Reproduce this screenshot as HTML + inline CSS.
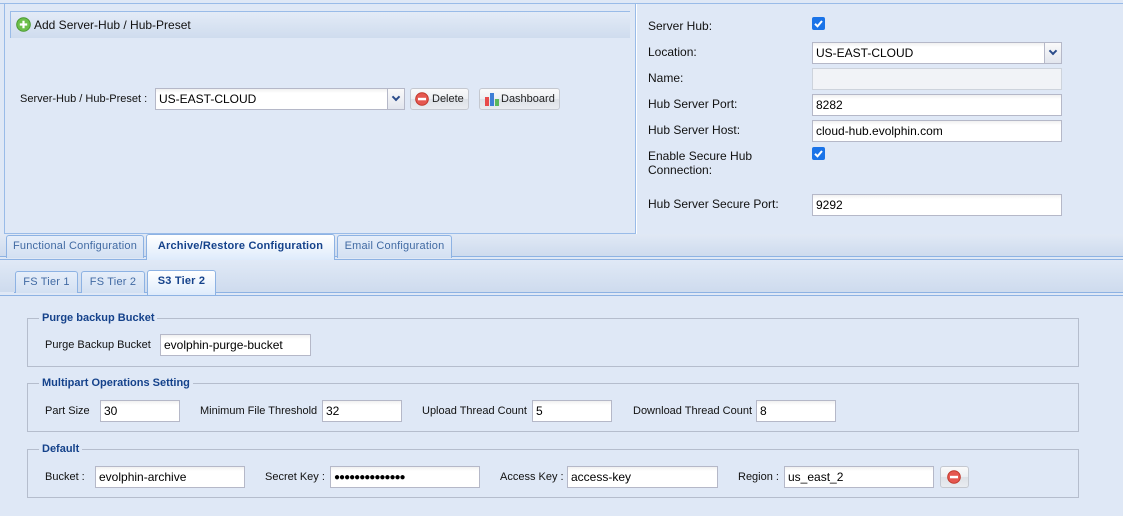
<!DOCTYPE html>
<html><head><meta charset="utf-8"><style>
*{box-sizing:border-box;margin:0;padding:0}
body{width:1123px;height:516px;background:#dfe8f6;font-family:"Liberation Sans",Arial,sans-serif;font-size:12px;color:#000;position:relative;overflow:hidden}
.a{position:absolute}
.lbl{position:absolute;font-size:12px;color:#111;white-space:nowrap}
.inp{position:absolute;height:22px;background:#fff;border:1px solid #b5b8c8;font-size:12px;line-height:21px;padding-left:3px;white-space:nowrap;background-image:linear-gradient(#f0f0f0,#fff 4px)}
.chk{position:absolute;width:13px;height:13px;background:#1a73e8;border-radius:2px}
.trig{position:absolute;right:0;top:0;width:17px;height:20px;background:linear-gradient(#fafafa,#e2e6ee);border-left:1px solid #b5b8c8}
.trig:after{content:"";position:absolute;left:5px;top:5px;width:4px;height:4px;border-right:2px solid #2b4c8a;border-bottom:2px solid #2b4c8a;transform:rotate(45deg)}
.btn{position:absolute;height:22px;border:1px solid #c4c8d0;border-radius:3px;background:linear-gradient(#fafafa 0%,#eceff3 50%,#dde1e7 51%,#e9ecf0 100%);font-size:11px;line-height:20px;color:#222}
.tab{position:absolute;height:23px;border:1px solid #8db2e3;border-bottom:none;border-radius:3px 3px 0 0;background:linear-gradient(#e6eefa,#d3e0f2);font-family:"Liberation Sans",Arial,sans-serif;font-size:11px;color:#416aa3;text-align:center;line-height:21px;white-space:nowrap;letter-spacing:0.2px}
.tab.on{background:linear-gradient(#fff,#deebfb);color:#15428b;font-weight:bold;height:24px}
.fs{position:absolute;border:1px solid #b5bdcd;left:27px;width:1052px;height:49px}
.lg{position:absolute;top:-7px;left:11px;background:#dfe8f6;padding:0 3px;font-size:11px;font-weight:bold;color:#15428b}
.fl{font-size:11px}
</style></head><body>
<div class="a" style="left:0;top:3px;width:1123px;height:1px;background:#99bbe8"></div>
<div class="a" style="left:4px;top:4px;width:632px;height:230px;border:1px solid #99bbe8;border-top:none;background:#dfe8f6"></div>
<div class="a" style="left:636px;top:4px;width:1px;height:230px;background:#fff"></div>
<div class="a" style="left:10px;top:11px;width:620px;height:27px;border:1px solid #99bbe8;border-right:none;border-bottom:none;background:linear-gradient(#e3ebf7,#cfdcee)"></div>
<svg class="a" style="left:16px;top:17px" width="15" height="15" viewBox="0 0 15 15"><circle cx="7.5" cy="7.5" r="6.8" fill="#6cbf4a" stroke="#4a9a32"/><path d="M7.5 3.8v7.4M3.8 7.5h7.4" stroke="#fff" stroke-width="2.2"/></svg>
<div class="lbl" style="left:34px;top:18px">Add Server-Hub / Hub-Preset</div>
<div class="lbl" style="left:20px;top:93px;font-size:11px">Server-Hub / Hub-Preset :</div>
<div class="inp" style="left:155px;top:88px;width:250px">US-EAST-CLOUD<div class="trig"></div></div>
<div class="btn" style="left:410px;top:88px;width:59px"><svg class="a" style="left:4px;top:3px" width="14" height="14"><circle cx="7" cy="7" r="6.3" fill="#e5574f" stroke="#c0392b"/><rect x="3" y="5.8" width="8" height="2.5" fill="#fff"/></svg><span class="a" style="left:21px;top:0">Delete</span></div>
<div class="btn" style="left:479px;top:88px;width:81px"><svg class="a" style="left:4px;top:3px" width="16" height="15"><rect x="1" y="5" width="4" height="9" fill="#e84a4a"/><rect x="6" y="1" width="4" height="13" fill="#3f7fd6"/><rect x="11" y="7" width="4" height="7" fill="#5cb85c"/></svg><span class="a" style="left:21px;top:0">Dashboard</span></div>
<div class="lbl" style="left:648px;top:19px">Server Hub:</div>
<div class="chk" style="left:812px;top:17px"><svg width="13" height="13"><path d="M3 6.8l2.5 2.5L10 4" stroke="#fff" stroke-width="2" fill="none"/></svg></div>
<div class="lbl" style="left:648px;top:45px">Location:</div>
<div class="inp" style="left:812px;top:42px;width:250px">US-EAST-CLOUD<div class="trig"></div></div>
<div class="lbl" style="left:648px;top:71px">Name:</div>
<div class="inp" style="left:812px;top:68px;width:250px;background:#f1f3f7;border-color:#cdd3dc"></div>
<div class="lbl" style="left:648px;top:97px">Hub Server Port:</div>
<div class="inp" style="left:812px;top:94px;width:250px">8282</div>
<div class="lbl" style="left:648px;top:123px">Hub Server Host:</div>
<div class="inp" style="left:812px;top:120px;width:250px">cloud-hub.evolphin.com</div>
<div class="lbl" style="left:648px;top:149px;line-height:14px">Enable Secure Hub<br>Connection:</div>
<div class="chk" style="left:812px;top:147px"><svg width="13" height="13"><path d="M3 6.8l2.5 2.5L10 4" stroke="#fff" stroke-width="2" fill="none"/></svg></div>
<div class="lbl" style="left:648px;top:197px">Hub Server Secure Port:</div>
<div class="inp" style="left:812px;top:194px;width:250px">9292</div>
<div class="a" style="left:0;top:234px;width:1123px;height:22px;background:linear-gradient(#e1e9f5,#cedbee)"></div>
<div class="a" style="left:0;top:256px;width:1123px;height:1px;background:#8db2e3"></div>
<div class="a" style="left:0;top:259px;width:1123px;height:1px;background:#8db2e3"></div>
<div class="tab" style="left:6px;top:235px;width:138px">Functional Configuration</div>
<div class="tab on" style="left:146px;top:234px;width:189px;height:26px;line-height:23px">Archive/Restore Configuration</div>
<div class="tab" style="left:337px;top:235px;width:115px">Email Configuration</div>
<div class="a" style="left:0;top:260px;width:1123px;height:32px;background:linear-gradient(#e0e9f6,#cedbee)"></div>
<div class="a" style="left:14px;top:292px;width:1109px;height:1px;background:#8db2e3"></div>
<div class="a" style="left:0;top:295px;width:1123px;height:1px;background:#8db2e3"></div>
<div class="tab" style="left:15px;top:271px;width:63px;height:22px">FS Tier 1</div>
<div class="tab" style="left:81px;top:271px;width:64px;height:22px">FS Tier 2</div>
<div class="tab on" style="left:147px;top:270px;width:69px;height:25px">S3 Tier 2</div>
<div class="fs" style="top:318px"><div class="lg">Purge backup Bucket</div></div>
<div class="lbl fl" style="left:45px;top:339px">Purge Backup Bucket</div>
<div class="inp" style="left:160px;top:334px;width:151px">evolphin-purge-bucket</div>
<div class="fs" style="top:383px"><div class="lg">Multipart Operations Setting</div></div>
<div class="lbl fl" style="left:45px;top:405px">Part Size</div>
<div class="inp" style="left:100px;top:400px;width:80px">30</div>
<div class="lbl fl" style="left:200px;top:405px">Minimum File Threshold</div>
<div class="inp" style="left:322px;top:400px;width:80px">32</div>
<div class="lbl fl" style="left:422px;top:405px">Upload Thread Count</div>
<div class="inp" style="left:532px;top:400px;width:80px">5</div>
<div class="lbl fl" style="left:633px;top:405px">Download Thread Count</div>
<div class="inp" style="left:756px;top:400px;width:80px">8</div>
<div class="fs" style="top:449px"><div class="lg">Default</div></div>
<div class="lbl fl" style="left:45px;top:471px">Bucket :</div>
<div class="inp" style="left:95px;top:466px;width:150px">evolphin-archive</div>
<div class="lbl fl" style="left:265px;top:471px">Secret Key :</div>
<div class="inp" style="left:330px;top:466px;width:150px;font-size:10px;letter-spacing:-1px">●●●●●●●●●●●●●●</div>
<div class="lbl fl" style="left:500px;top:471px">Access Key :</div>
<div class="inp" style="left:567px;top:466px;width:151px">access-key</div>
<div class="lbl fl" style="left:738px;top:471px">Region :</div>
<div class="inp" style="left:784px;top:466px;width:150px">us_east_2</div>
<div class="btn" style="left:940px;top:466px;width:29px"><svg class="a" style="left:6px;top:3px" width="14" height="14"><circle cx="7" cy="7" r="6.3" fill="#e5574f" stroke="#c0392b"/><rect x="3" y="5.8" width="8" height="2.5" fill="#fff"/></svg></div>
</body></html>
